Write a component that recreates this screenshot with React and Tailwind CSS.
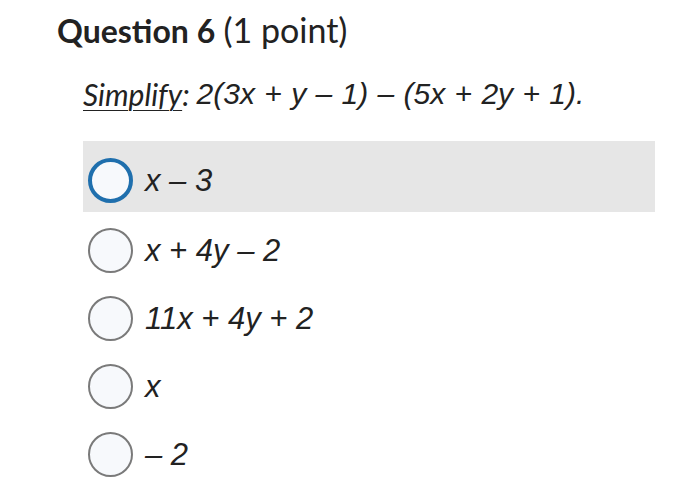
export default function App() {
  const options = ["x – 3", "x + 4y – 2", "11x + 4y + 2", "x", "– 2"];
  const Radio = ({ selected }) => (
    <span
      className={
        "w-[45px] h-[45px] rounded-full bg-[#f7f9fc] shrink-0 " +
        (selected ? "border-[4px] border-[#1f6fad]" : "border-2 border-[#7a7a7a]")
      }
    />
  );
  const Label = ({ children }) => (
    <span className="font-['Liberation_Sans',sans-serif] italic text-[31px] leading-none text-[#222]">{children}</span>
  );
  return (
    <div className="w-[700px] h-[492px] bg-white text-[#222] overflow-hidden">
      <div className="pt-[10px] pl-[57px]">
        <h2 className="text-[32px] leading-[40px] font-['Lato',sans-serif] text-[#222]">
          <span className="font-bold">Question 6</span>{" "}
          <span className="font-normal text-[34px]">(1 point)</span>
        </h2>
      </div>
      <div className="pl-[83px] mt-[25px] h-[36px] flex items-center font-['Lato',sans-serif] italic text-[30px] leading-none whitespace-nowrap">
        <span className="underline decoration-1 underline-offset-4">Simplify</span>
        <span>:&nbsp;</span>
        <span className="font-['Liberation_Sans',sans-serif] [word-spacing:1px]">2(3x + y – 1) – (5x + 2y + 1).</span>
      </div>
      <div className="mt-[29px] ml-[83px] w-[572px] flex flex-col">
        <div className="bg-[#e6e6e6] h-[71px] pt-[8px] flex items-center gap-[12px] pl-[5px]">
          <Radio selected />
          <Label>{options[0]}</Label>
        </div>
        <div className="mt-[4px] flex flex-col">
          {options.slice(1).map((o, i) => (
            <div key={i} className="h-[68px] flex items-center gap-[12px] pl-[5px]">
              <Radio />
              <Label>{o}</Label>
            </div>
          ))}
        </div>
      </div>
    </div>
  );
}
